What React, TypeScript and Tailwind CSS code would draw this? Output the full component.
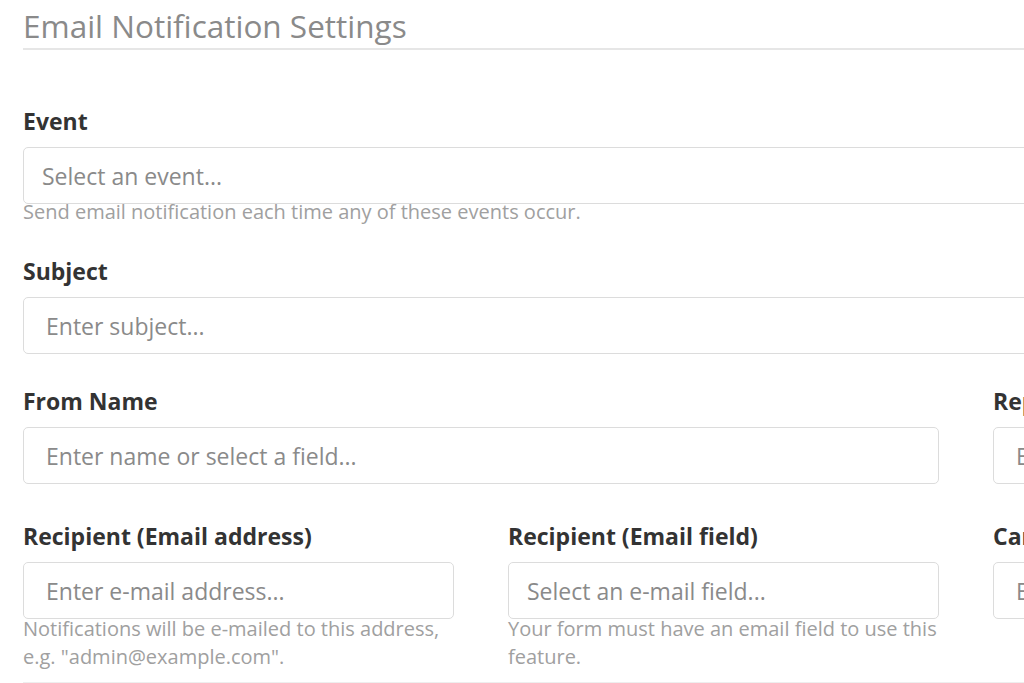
import React from 'react';

const font = { fontFamily: '"Open Sans", "Noto Sans", sans-serif' };

function Label({ children }: { children: React.ReactNode }) {
  return <div className="text-[23px] leading-[30px] font-bold text-[#333] mb-[11px] whitespace-nowrap">{children}</div>;
}

function Field({ placeholder, pad = 'px-[22px]' }: { placeholder: string; pad?: string }) {
  return (
    <input
      className={`block w-full h-[57px] rounded-[5px] border border-[#dcdcdc] bg-white ${pad} text-[23px] text-[#333] placeholder:text-[#8a8a8a] outline-none`}
      placeholder={placeholder}
    />
  );
}

function Help({ children }: { children: React.ReactNode }) {
  return <p className="text-[20px] leading-[28px] text-[#a0a0a0] whitespace-nowrap">{children}</p>;
}

export default function App() {
  return (
    <div className="w-[1024px] h-[683px] overflow-hidden bg-white" style={font}>
      <div className="ml-[23px] w-[1401px]">
        <h1 className="text-[31.5px] leading-[40px] pt-[6px] pb-[2px] text-[#8a8a8a] border-b-2 border-[#e6e6e6]">
          Email Notification Settings
        </h1>

        <div className="mt-[56px]">
          <Label>Event</Label>
          <Field placeholder="Select an event..." pad="px-[18px]" />
          <div className="-mt-[6px]">
            <Help>Send email notification each time any of these events occur.</Help>
          </div>
        </div>

        <div className="mt-[30px]">
          <Label>Subject</Label>
          <Field placeholder="Enter subject..." />
        </div>

        <div className="mt-[32px] grid grid-cols-3 gap-x-[54px]">
          <div className="col-span-2">
            <Label>From Name</Label>
            <Field placeholder="Enter name or select a field..." />
          </div>
          <div>
            <Label>Reply-to</Label>
            <Field placeholder="Enter e-mail address..." />
          </div>
        </div>

        <div className="mt-[37px] grid grid-cols-3 gap-x-[54px]">
          <div>
            <Label>Recipient (Email address)</Label>
            <Field placeholder="Enter e-mail address..." />
            <div className="-mt-[4px]">
              <Help>
                Notifications will be e-mailed to this address,
                <br />
                e.g. "admin@example.com".
              </Help>
            </div>
          </div>
          <div>
            <Label>Recipient (Email field)</Label>
            <Field placeholder="Select an e-mail field..." pad="px-[18px]" />
            <div className="-mt-[4px]">
              <Help>
                Your form must have an email field to use this
                <br />
                feature.
              </Help>
            </div>
          </div>
          <div>
            <Label>Carbon copy</Label>
            <Field placeholder="Enter e-mail address..." />
          </div>
        </div>

        <div className="mt-[11px] border-t-2 border-[#eeeeee]" />
      </div>
    </div>
  );
}
